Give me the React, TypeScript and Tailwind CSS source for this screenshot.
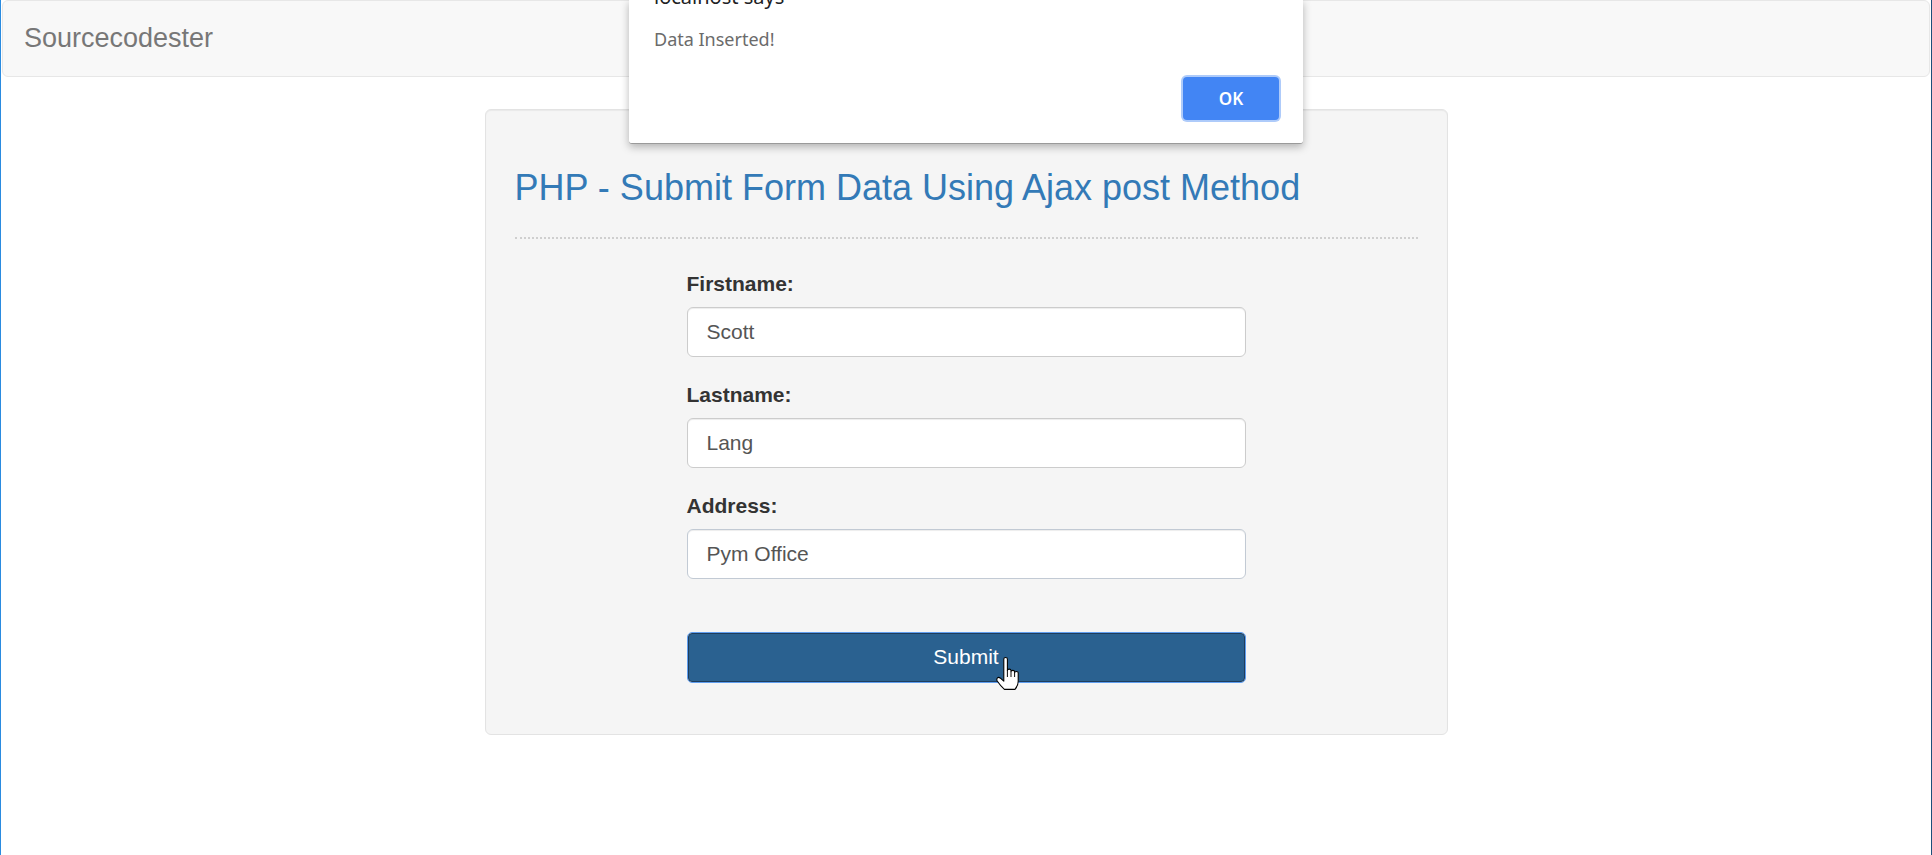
import React from "react";

function HandCursor() {
  return (
    <svg
      width="24"
      height="36"
      viewBox="0 0 20 30"
      className="absolute left-[995px] top-[656px]"
    >
      <path
        d="M6.5 2.5 C6.5 0.9 9.5 0.9 9.5 2.5 V12 C9.5 10.6 12.5 10.6 12.5 12 V13 C12.5 11.6 15.5 11.6 15.5 13 V14 C15.5 12.6 18.5 12.6 18.5 14 V21 C18.5 24.5 17 26.5 15.8 27.8 H7 C5 26 2.5 23 1 20.8 C0 18.8 1.8 17 3.4 18.3 L6.5 21 Z"
        fill="#ffffff"
        stroke="#000000"
        strokeWidth="0.9"
        strokeLinejoin="round"
      />
      <path d="M9.5 12 V17.5 M12.5 13 V17.5 M15.5 14 V17.5" stroke="#000" strokeWidth="0.8" fill="none" />
    </svg>
  );
}

function Field({ label, value, bluish }: { label: string; value: string; bluish?: boolean }) {
  return (
    <div className="mb-[23px]">
      <div className="text-[21px] leading-[30px] font-bold text-[#333333] mb-[8px]">{label}</div>
      <div
        className={
          "h-[50px] rounded-[6px] bg-white border flex items-center pl-[19px] text-[21px] text-[#555555] " +
          (bluish ? "border-[#c2cad4]" : "border-[#cccccc]")
        }
        style={{ boxShadow: "inset 0 1px 1px rgba(0,0,0,.075)" }}
      >
        {value}
      </div>
    </div>
  );
}

export default function App() {
  return (
    <div
      className="relative w-full h-[855px] overflow-hidden bg-white border-l border-r border-l-[#2a8be0] border-r-[#1d4f7a]"
      style={{ fontFamily: '"Liberation Sans", Arial, Helvetica, sans-serif' }}
    >
      {/* navbar */}
      <div className="mx-[1px] h-[77px] rounded-[6px] border border-[#e7e7e7] bg-[#f8f8f8] flex items-center pl-[21px]">
        <span className="text-[27px] leading-[27px] text-[#777777]">Sourcecodester</span>
      </div>

      {/* panel */}
      <div className="mx-auto mt-[32px] w-[963px] rounded-[6px] border border-[#e3e3e3] bg-[#f5f5f5] px-[29px] pt-[58px] pb-[28px]"
        style={{ boxShadow: "inset 0 1px 1px rgba(0,0,0,.05)" }}
      >
        <h3 className="text-[36px] leading-[39.6px] text-[#337ab7]">
          PHP - Submit Form Data Using Ajax post Method
        </h3>
        <div className="mt-[29px] mb-[30px] border-t-2 border-dotted border-[#cfcfcf]" />
        <div className="mx-auto w-[559px]">
          <Field label="Firstname:" value="Scott" />
          <Field label="Lastname:" value="Lang" />
          <Field label="Address:" value="Pym Office" bluish />
          <div className="pt-[30px] pb-[23px]">
            <div className="rounded-[5px] border border-[#5f9ef0] p-0">
              <div className="h-[49px] rounded-[4px] border border-[#1f3d5c] bg-[#2a6190] flex items-center justify-center text-white text-[21px]">
                Submit
              </div>
            </div>
          </div>
        </div>
      </div>

      {/* alert dialog */}
      <div
        className="absolute left-[628px] top-0 w-[674px] h-[144px] bg-white rounded-b-[3px] border-b border-[#9a9a9a]"
        style={{ boxShadow: "0 3px 8px rgba(0,0,0,0.28)", fontFamily: '"Noto Sans", "Open Sans", sans-serif' }}
      >
        <div className="pl-[25px] pr-[22px]">
          <div className="-mt-[16px] h-[26px] text-[20px] leading-[26px] text-[#202124]">localhost says</div>
          <div className="mt-[17px] h-[24px] text-[18px] leading-[24px] text-[#6b6b6b]">Data Inserted!</div>
          <div className="mt-[24px] flex justify-end">
            <div className="w-[100px] h-[47px] rounded-[6px] bg-[#aecbfa] p-[2px]">
              <div className="w-full h-full rounded-[4px] bg-[#4285f4] flex items-center justify-center text-white text-[17px] font-semibold">
                OK
              </div>
            </div>
          </div>
        </div>
      </div>

      <HandCursor />
    </div>
  );
}
